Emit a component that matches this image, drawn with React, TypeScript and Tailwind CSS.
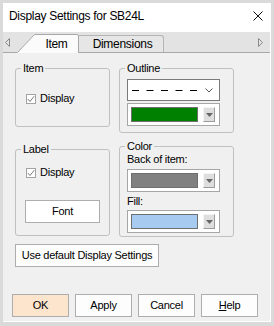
import type { ReactNode } from 'react';

const ui = "font-['Liberation_Sans',Arial,sans-serif]";

function Check() {
  return (
    <span className="w-[10px] h-[10px] border border-[#a3a3a3] bg-white flex items-center justify-center shrink-0">
      <svg width="8" height="8" viewBox="0 0 8 8">
        <polyline points="0.8,4 3,6.5 7.2,1.2" fill="none" stroke="#7a7a7a" strokeWidth="1" />
      </svg>
    </span>
  );
}

function DropBtn() {
  return (
    <span className="ml-[5px] w-[12px] h-[15px] bg-[#dedede] border border-t-[#f4f4f4] border-l-[#f4f4f4] border-r-[#9c9c9c] border-b-[#9c9c9c] flex items-center justify-center shrink-0">
      <svg width="7" height="4" viewBox="0 0 7 4">
        <path d="M0 0h7L3.5 4z" fill="#666666" />
      </svg>
    </span>
  );
}

function ColorCombo({ color, className }: { color: string; className: string }) {
  return (
    <div className={`w-[93px] h-[23px] bg-white border border-[#a6a6a6] flex items-center px-[3px] ${className}`}>
      <span className={`w-[67px] h-[15px] border border-[#6e6e6e] ${color}`} />
      <DropBtn />
    </div>
  );
}

function Group({ title, className, children }: { title: string; className: string; children: ReactNode }) {
  return (
    <fieldset className={`border border-[#c0c0c0] rounded-[3px] p-0 m-0 min-w-0 ${className}`}>
      <legend className="ml-[5px] px-[2px] text-[11px] leading-[12px]">{title}</legend>
      {children}
    </fieldset>
  );
}

function Button({ children, className }: { children: ReactNode; className: string }) {
  return (
    <button className={`h-[23px] border border-[#adadad] flex items-center justify-center text-[11px] leading-[13px] ${className}`}>
      {children}
    </button>
  );
}

export default function App() {
  return (
    <div className={`w-[274px] h-[326px] bg-[#dadada] pt-[3px] pl-[3px] text-black tracking-[-0.25px] ${ui}`}>
      <div className="w-[268px] h-[319px] flex flex-col bg-[#f0f0f0] border-r border-b border-white">
        {/* title bar */}
        <div className="h-[29px] bg-white flex items-center justify-between pl-[6px] pr-[7px] pb-[3px]">
          <span className="text-[12px] leading-[14px] tracking-[-0.3px]">Display Settings for SB24L</span>
          <svg width="10" height="10" viewBox="0 0 10 10">
            <path d="M0.5 0.5L9.5 9.5M9.5 0.5L0.5 9.5" stroke="#111111" strokeWidth="1" />
          </svg>
        </div>

        {/* tabs */}
        <div className="h-[21px] bg-[#e3e3e3] border-b border-[#a8a8a8] flex items-end">
          <svg className="self-center ml-[2px]" width="5" height="9" viewBox="0 0 5 9">
            <path d="M4.5 0.5V8.5L0.5 4.5Z" fill="none" stroke="#8a8a8a" strokeWidth="1" />
          </svg>
          <div className="relative ml-[7px] w-[62px] h-[19px] -mb-px flex items-center justify-center pl-[17px] text-[12px] leading-[14px] tracking-[-0.3px]">
            <svg className="absolute inset-0" width="62" height="19" viewBox="0 0 62 19">
              <path d="M0 19L17.5 0.5H61.5V19Z" fill="#fbfbfb" />
              <path d="M0.5 18.5L17.5 0.5H60Q61.5 0.5 61.5 2V19" fill="none" stroke="#a8a8a8" strokeWidth="1" />
            </svg>
            <span className="relative">Item</span>
          </div>
          <div className="w-[85px] h-[17px] bg-[#e6e6e6] border-t border-r border-[#b4b4b4] rounded-tr-[3px] flex items-center justify-center pl-[3px] text-[12px] leading-[14px] tracking-[-0.3px]">
            Dimensions
          </div>
          <svg className="self-center ml-auto mr-[7px]" width="5" height="9" viewBox="0 0 5 9">
            <path d="M0.5 0.5V8.5L4.5 4.5Z" fill="none" stroke="#8a8a8a" strokeWidth="1" />
          </svg>
        </div>

        {/* panel */}
        <div className="flex-1 flex flex-col pl-[9px] pt-[9px] pb-[4px]">
          <div className="flex ml-[3px] gap-[9px]">
            <div className="flex flex-col">
              <Group title="Item" className="w-[95px] h-[65px]">
                <div className="mt-[18px] pl-[10px] h-[13px] flex items-center">
                  <Check />
                  <span className="ml-[4px] text-[11px] leading-[13px]">Display</span>
                </div>
              </Group>
              <Group title="Label" className="w-[95px] h-[93px] mt-[16px]">
                <div className="mt-[11px] pl-[10px] h-[13px] flex items-center">
                  <Check />
                  <span className="ml-[4px] text-[11px] leading-[13px]">Display</span>
                </div>
                <Button className="mt-[21px] ml-[9px] w-[75px] bg-white">Font</Button>
              </Group>
            </div>
            <div className="flex flex-col">
              <Group title="Outline" className="w-[115px] h-[71px]">
                <div className="pl-[7px]">
                  <div className="mt-[5px] w-[93px] h-[22px] bg-white border border-[#7a7a7a] flex items-center pl-[4px] pr-[6px]">
                    <svg width="66" height="3" viewBox="0 0 66 3">
                      <line x1="0" y1="1.5" x2="66" y2="1.5" stroke="#000000" strokeWidth="1" strokeDasharray="7 7.5" />
                    </svg>
                    <svg className="ml-auto" width="8" height="5" viewBox="0 0 8 5">
                      <path d="M0.5 0.5L4 4L7.5 0.5" fill="none" stroke="#555555" strokeWidth="1" />
                    </svg>
                  </div>
                  <ColorCombo color="bg-[#008000]" className="mt-[2px]" />
                </div>
              </Group>
              <Group title="Color" className="w-[115px] h-[97px] mt-[7px]">
                <div className="pl-[7px] flex flex-col">
                  <span className="mt-[1px] text-[11px] leading-[13px]">Back of item:</span>
                  <ColorCombo color="bg-[#808080]" className="mt-[3px]" />
                  <span className="mt-[3px] text-[11px] leading-[13px]">Fill:</span>
                  <ColorCombo color="bg-[#a6caf0]" className="mt-[2px]" />
                </div>
              </Group>
            </div>
          </div>

          <Button className="mt-[7px] ml-[3px] w-[144px] bg-[#fdfdfd]">Use default Display Settings</Button>

          <div className="mt-auto flex gap-[6px]">
            <Button className="w-[57px] bg-[#fde5cd]">OK</Button>
            <Button className="w-[57px] bg-[#fdfdfd]">Apply</Button>
            <Button className="w-[57px] bg-[#fdfdfd]">Cancel</Button>
            <Button className="w-[57px] bg-[#fdfdfd]">
              <span className="underline underline-offset-[1px]">H</span>elp
            </Button>
          </div>
        </div>
      </div>
    </div>
  );
}
